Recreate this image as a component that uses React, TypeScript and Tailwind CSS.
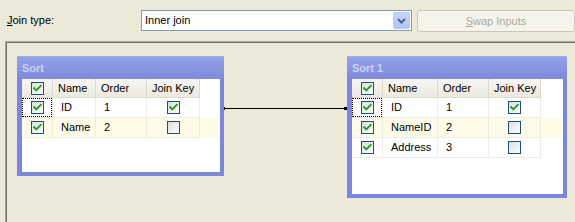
import React from "react"

type Row = { name: string; order: number; key: boolean }

function Check({ checked }: { checked: boolean }) {
  return (
    <svg width="13" height="13" viewBox="0 0 13 13" className="block">
      <defs>
        <linearGradient id="cbg" x1="0" y1="0" x2="1" y2="1">
          <stop offset="0" stopColor="#DCDCD6" />
          <stop offset="1" stopColor="#FFFFFF" />
        </linearGradient>
      </defs>
      <rect x="0.5" y="0.5" width="12" height="12" fill="url(#cbg)" stroke="#1C5180" />
      {checked && (
        <path d="M3.2 6.2 L5.3 8.4 L9.8 3.8" fill="none" stroke="#21A121" strokeWidth="1.9" strokeLinecap="square" />
      )}
    </svg>
  )
}

function NodeWindow({
  title,
  rows,
  cols,
  className,
}: {
  title: string
  rows: Row[]
  cols: number[]
  className: string
}) {
  const [c0, c1, c2, c3] = cols
  return (
    <div className={`absolute flex flex-col bg-[#7A87DC] pl-[5px] pr-[4px] pb-[4px] ${className}`}>
      <div className="h-[23px] shrink-0 flex items-center font-bold text-[#C9D2F4] bg-gradient-to-b from-[#93A0E8] to-[#7D8ADD] -mr-[4px] -ml-[5px] pl-[5px] border-t border-[#A3AEEC]">
        {title}
      </div>
      <div className="flex-1 bg-white">
        <div className="flex h-[19px]">
          {[c0, c1, c2, c3].map((w, i) => (
            <div
              key={i}
              style={{ width: w }}
              className={`flex items-center border-r border-b border-[#DCD9CE] bg-gradient-to-b from-[#F7F6F1] to-[#EBE9E0] ${
                i === 0 ? "justify-center" : "pl-[5px]"
              }`}
            >
              {i === 0 ? <Check checked /> : ["", "Name", "Order", "Join Key"][i]}
            </div>
          ))}
        </div>
        {rows.map((r, ri) => (
          <div key={ri} className={`flex h-[20px] ${ri % 2 === 1 ? "bg-[#FEFCE9]" : "bg-white"}`}>
            <div style={{ width: c0 }} className="relative flex items-center justify-center border-r border-b border-[#EEECE3]">
              {ri === 0 && <div className="absolute inset-0 border border-dotted border-black" />}
              <Check checked />
            </div>
            <div style={{ width: c1 }} className="flex items-center pl-[8px] border-r border-b border-[#EEECE3]">
              {r.name}
            </div>
            <div style={{ width: c2 }} className="flex items-center pl-[8px] border-r border-b border-[#EEECE3]">
              {r.order}
            </div>
            <div style={{ width: c3 }} className="flex items-center justify-center border-r border-b border-[#EEECE3]">
              <Check checked={r.key} />
            </div>
          </div>
        ))}
      </div>
    </div>
  )
}

export default function App() {
  return (
    <div
      className="w-[575px] h-[222px] overflow-hidden bg-[#ECE9D8] text-[11px] text-black"
      style={{ fontFamily: '"Liberation Sans", Arial, sans-serif' }}
    >
      <div className="h-[41px] flex items-start pt-[10px]">
        <div className="w-[141px] pl-[7px] h-[21px] flex items-center">
          <span className="underline underline-offset-1">J</span>oin type:
        </div>
        <div className="w-[271px] h-[21px] bg-white border border-[#7F9DB9] flex items-center justify-between">
          <span className="pl-[3px]">Inner join</span>
          <div className="w-[17px] h-[17px] mr-px rounded-[2px] bg-gradient-to-b from-[#C6D5FC] to-[#B0C4F6] border border-[#B9CBF5] flex items-center justify-center">
            <svg width="9" height="6" viewBox="0 0 9 6">
              <path d="M1 1 L4.5 4.5 L8 1" fill="none" stroke="#4D6185" strokeWidth="2" />
            </svg>
          </div>
        </div>
        <div className="ml-[5px] w-[158px] h-[22px] rounded-[3px] border border-[#C9C7BA] bg-[#F5F4EA] text-[#ACA899] flex items-center justify-center">
          <span className="underline underline-offset-1">S</span>wap Inputs
        </div>
      </div>
      <div className="ml-[5px] h-[181px] border-t border-l border-[#ACA899]">
        <div className="relative h-full border-t border-l border-[#716F64]">
          <div className="absolute left-[217px] top-[65px] w-[123px] h-px bg-black" />
          <div className="absolute left-[217px] top-[64px] w-px h-[3px] bg-black" />
          <div className="absolute left-[337px] top-[64px] w-[3px] h-[3px] bg-black" />
          <NodeWindow
            title="Sort"
            className="left-[10px] top-[13px] w-[207px] h-[120px]"
            cols={[31, 43, 51, 53]}
            rows={[
              { name: "ID", order: 1, key: true },
              { name: "Name", order: 2, key: false },
            ]}
          />
          <NodeWindow
            title="Sort 1"
            className="left-[340px] top-[13px] w-[220px] h-[142px]"
            cols={[31, 55, 51, 52]}
            rows={[
              { name: "ID", order: 1, key: true },
              { name: "NameID", order: 2, key: false },
              { name: "Address", order: 3, key: false },
            ]}
          />
        </div>
      </div>
    </div>
  )
}
